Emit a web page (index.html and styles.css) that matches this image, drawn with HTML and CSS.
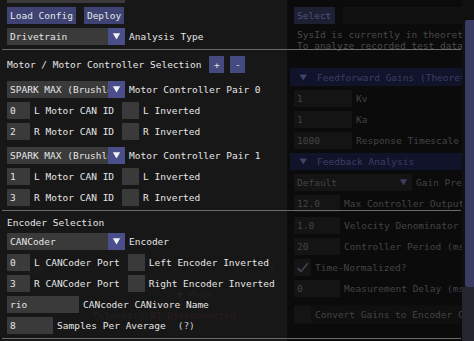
FILE: index.html
```html
<!DOCTYPE html>
<html>
<head>
<meta charset="utf-8">
<link rel="stylesheet" href="styles.css">
</head>
<body>
<div class="app">
  <div class="left">
    <div class="row cut"><div class="frame w118"></div></div>
    <div class="row"><div class="btn">Load Config</div><div class="btn sp">Deploy</div></div>
    <div class="row">
      <div class="combo"><span class="ctext">Drivetrain</span><span class="arrow"><svg width="17" height="17" viewBox="0 0 17 17"><polygon points="4.8,5.2 12.2,5.2 8.5,11.5" fill="#f2f2f2"/></svg></span></div>
      <span class="lbl">Analysis Type</span>
    </div>
    <div class="sep"></div>
    <div class="row mt2"><span class="txt">Motor / Motor Controller Selection</span><div class="btn sq sp">+</div><div class="btn sq sp6">-</div></div>
    <div class="row mt4">
      <div class="combo"><span class="ctext">SPARK MAX (Brushless)</span><span class="arrow"><svg width="17" height="17" viewBox="0 0 17 17"><polygon points="4.8,5.2 12.2,5.2 8.5,11.5" fill="#f2f2f2"/></svg></span></div>
      <span class="lbl">Motor Controller Pair 0</span>
    </div>
    <div class="row"><div class="frame w23">0</div><span class="lbl">L Motor CAN ID</span><div class="cb sp"></div><span class="lbl">L Inverted</span></div>
    <div class="row"><div class="frame w23">2</div><span class="lbl">R Motor CAN ID</span><div class="cb sp"></div><span class="lbl">R Inverted</span></div>
    <div class="row mt3">
      <div class="combo"><span class="ctext">SPARK MAX (Brushless)</span><span class="arrow"><svg width="17" height="17" viewBox="0 0 17 17"><polygon points="4.8,5.2 12.2,5.2 8.5,11.5" fill="#f2f2f2"/></svg></span></div>
      <span class="lbl">Motor Controller Pair 1</span>
    </div>
    <div class="row"><div class="frame w23">1</div><span class="lbl">L Motor CAN ID</span><div class="cb sp"></div><span class="lbl">L Inverted</span></div>
    <div class="row"><div class="frame w23">3</div><span class="lbl">R Motor CAN ID</span><div class="cb sp"></div><span class="lbl">R Inverted</span></div>
    <div class="sep"></div>
    <div class="row trow"><span class="txt">Encoder Selection</span></div>
    <div class="row">
      <div class="combo"><span class="ctext">CANCoder</span><span class="arrow"><svg width="17" height="17" viewBox="0 0 17 17"><polygon points="4.8,5.2 12.2,5.2 8.5,11.5" fill="#f2f2f2"/></svg></span></div>
      <span class="lbl">Encoder</span>
    </div>
    <div class="row"><div class="frame w23">0</div><span class="lbl">L CANCoder Port</span><div class="cb sp"></div><span class="lbl">Left Encoder Inverted</span></div>
    <div class="row"><div class="frame w23">3</div><span class="lbl">R CANCoder Port</span><div class="cb sp"></div><span class="lbl">Right Encoder Inverted</span></div>
    <div class="row"><div class="frame w72">rio</div><span class="lbl">CANcoder CANivore Name</span></div>
    <div class="row"><div class="frame w46">8</div><span class="lbl">Samples Per Average</span><span class="lbl q">(?)</span></div>
    <div class="sep"></div>
  </div>

  <div class="right">
    <div class="rrow"><div class="rbtn">Select</div><div class="rbox"></div></div>
    <div class="rtext">SysId is currently in theoretical mode.<br>To analyze recorded test data, select a data file.</div>
    <div class="rhead"><svg width="9" height="9" viewBox="0 0 9 9"><polygon points="0.5,1.5 8,1.5 4.25,7.5" fill="#3e4168"/></svg><span>Feedforward Gains (Theoretical)</span></div>
    <div class="rrow"><div class="rframe w58">1</div><span class="rlbl">Kv</span></div>
    <div class="rrow"><div class="rframe w58">1</div><span class="rlbl">Ka</span></div>
    <div class="rrow"><div class="rframe w58">1000</div><span class="rlbl">Response Timescale (ms)</span></div>
    <div class="rhead h17"><svg width="9" height="9" viewBox="0 0 9 9"><polygon points="0.5,1.5 8,1.5 4.25,7.5" fill="#3e4168"/></svg><span>Feedback Analysis</span></div>
    <div class="rrow"><div class="rcombo"><span>Default</span><svg width="17" height="17" viewBox="0 0 17 17"><polygon points="4.8,5.2 12.2,5.2 8.5,11.5" fill="#3b3e60"/></svg></div><span class="rlbl">Gain Preset</span></div>
    <div class="rrow"><div class="rframe w46">12.0</div><span class="rlbl">Max Controller Output</span></div>
    <div class="rrow mt1"><div class="rframe w46">1.0</div><span class="rlbl">Velocity Denominator Units</span></div>
    <div class="rrow"><div class="rframe w46">20</div><span class="rlbl">Controller Period (ms)</span></div>
    <div class="rrow"><div class="rcb"><svg width="17" height="17" viewBox="0 0 17 17"><polyline points="3.5,9 7,12.5 14,4" fill="none" stroke="#3f3f4c" stroke-width="1.8"/></svg></div><span class="rlbl">Time-Normalized?</span></div>
    <div class="rrow"><div class="rframe w46">0</div><span class="rlbl">Measurement Delay (ms)</span></div>
    <div class="rrow conv"><div class="rcb"></div><span class="rlbl">Convert Gains to Encoder Counts</span></div>
  </div>

  <div class="scroll"><div class="thumb"></div><div class="lower"></div></div>

  <div class="ghost g-logger">Logger</div>
  <div class="ghost g-x">×</div>
  <div class="ghost g-mode">▼ Mode</div>
  <div class="ghost g-tele">Telemetry:</div>
  <div class="ghost g-nt">NT Disconnected</div>
</div>
</body>
</html>
```

FILE: styles.css
```css
* { box-sizing: border-box; margin: 0; padding: 0; }
html, body { width: 474px; height: 341px; overflow: hidden; background: #0b0b0b; }
body {
  font-family: "DejaVu Sans Mono", "Liberation Mono", monospace;
  font-size: 9.5px;
  color: #e6e6e6;
}
.app { position: relative; display: flex; width: 474px; height: 341px; overflow: hidden; }

/* left window */
.left {
  width: 287px; flex: none; background: #171717;
  display: flex; flex-direction: column; gap: 4px;
  padding-left: 7px; position: relative; z-index: 2;
}
.row { display: flex; align-items: center; height: 17px; flex: none; white-space: nowrap; }
.cut { margin-top: -14px; }
.mt2 { margin-top: 2px; }
.mt3 { margin-top: 3px; }
.mt4 { margin-top: 4px; }
.trow { height: 14px; margin-top: 0; }

.frame {
  height: 17px; line-height: 17px; background: #3a3a3a;
  padding-left: 3px; flex: none; overflow: hidden;
}
.w23 { width: 23px; }
.w46 { width: 46px; }
.w72 { width: 72px; }
.w118 { width: 118px; }

.btn {
  height: 17px; line-height: 17px; background: #3e4374;
  padding: 0 3px; flex: none;
}
.sq { width: 15px; padding: 0; text-align: center; background: #444a80; }
.sp { margin-left: 8px; }
.sp6 { margin-left: 6px; }

.combo {
  width: 118px; height: 17px; background: #3a3a3a; display: flex; flex: none;
}
.ctext { width: 101px; padding-left: 3px; line-height: 17px; overflow: hidden; white-space: nowrap; }
.arrow { width: 17px; height: 17px; background: #4a4f8c; display: block; }
.arrow svg { display: block; }

.lbl { margin-left: 4px; line-height: 17px; }
.q { margin-left: 12px; color: #cfcfcf; }
.txt { line-height: 17px; }
.cb { width: 17px; height: 17px; background: #3a3a3a; flex: none; }

.sep {
  height: 1px; width: 459px; margin-left: -5px; background: #6b6b6b; flex: none;
  position: relative; z-index: 3;
}

/* right (inactive) window */
.right {
  width: 175px; flex: none; background: #0b0b0b; color: #444444;
  display: flex; flex-direction: column; gap: 4px;
  padding-top: 7px; padding-left: 7px; overflow: hidden; white-space: nowrap;
}
.rrow { display: flex; align-items: center; height: 17px; flex: none; }
.mt1 { margin-top: 1px; }
.rbtn { height: 17px; line-height: 17px; padding: 0 3px; width: 41px; background: #1d1f33; color: #4d5279; flex: none; }
.rbox { width: 130px; height: 17px; margin-left: 8px; background: #111111; flex: none; }
.rtext { line-height: 11px; margin-top: 1px; padding-left: 3px; color: #4a4a4a; }
.rhead {
  height: 18px; margin-top: 13px; margin-left: -4px; width: 175px;
  background: #11132a; color: #3b3e63; display: flex; align-items: center; flex: none;
}
.rhead svg { margin-left: 9px; margin-right: 9px; flex: none; }
.h17 { height: 17px; margin-top: 0; }
.rframe { height: 17px; line-height: 17px; background: #141414; padding-left: 3px; flex: none; }
.w58 { width: 58px; }
.rlbl { margin-left: 4px; line-height: 17px; }
.rcombo { width: 118px; height: 17px; background: #141414; display: flex; align-items: center; justify-content: space-between; padding-left: 3px; flex: none; }
.rcombo svg { display: block; }
.rcb { width: 17px; height: 17px; background: #141414; flex: none; }
.rcb svg { display: block; }
.conv { height: 19px; margin-top: 4px; background: #0f0f0f; }

/* scrollbar */
.scroll { width: 12px; flex: none; background: #101010; display: flex; flex-direction: column; padding-top: 20px; }
.thumb { width: 9px; height: 267px; margin-left: 3px; background: #3a3c63; border-radius: 2px 0 0 2px; }
.lower { width: 12px; flex: 1; background: #24252f; }

/* ghost text from a window behind */
.ghost { position: absolute; z-index: 5; color: rgba(210, 210, 210, 0.07); white-space: nowrap; line-height: 11px; }
.g-logger { left: 15px; top: 262px; }
.g-x { left: 268px; top: 262px; font-size: 11px; }
.g-mode { left: 177px; top: 289px; }
.g-tele { left: 93px; top: 310px; }
.g-nt { left: 150px; top: 310px; color: rgba(200, 60, 60, 0.14); }
```
